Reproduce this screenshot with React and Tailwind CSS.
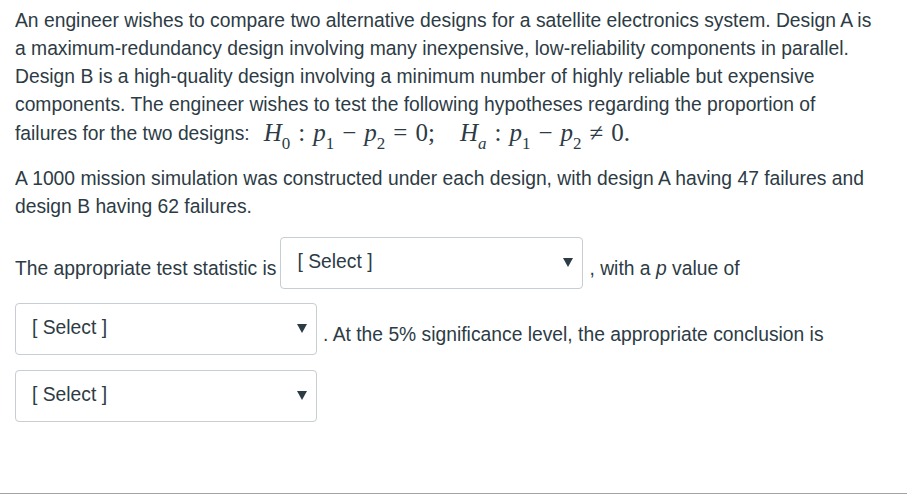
import React from 'react';

// Inline dropdown used inside the question text
function InlineSelect({ width }) {
  return (
    <div
      className={`flex h-[52px] ${width} shrink-0 items-center justify-between rounded-[4px] border border-[#c7cdd1] bg-white pl-[16px] pr-[9px] text-[19.3px] text-[#2d3b45]`}
    >
      <span className="-mt-[2px]">[ Select ]</span>
      <svg width="10" height="9" viewBox="0 0 10 9" className="-mt-[2px]">
        <polygon points="0,0 10,0 5,9" fill="#2d3b45" />
      </svg>
    </div>
  );
}

function Sub({ children }) {
  return <sub className="text-[17px] not-italic leading-none align-[-4px]">{children}</sub>;
}

function Op({ children, className = 'mx-[8px]' }) {
  return <span className={className}>{children}</span>;
}

export default function App() {
  return (
    <div
      className="relative h-[499px] w-[907px] bg-white text-[#2d3b45]"
      style={{ fontFamily: '"Liberation Sans", Arial, sans-serif' }}
    >
      <div className="pl-[15px] pt-[7px] text-[19.3px] leading-[28px]">
        {/* Question body */}
        <p className="whitespace-nowrap">
          An engineer wishes to compare two alternative designs for a satellite electronics system. Design A is
          <br />
          a maximum-redundancy design involving many inexpensive, low-reliability components in parallel.
          <br />
          Design B is a high-quality design involving a minimum number of highly reliable but expensive
          <br />
          components. The engineer wishes to test the following hypotheses regarding the proportion of
          <br />
          <span className="inline-flex h-[30px] items-center">
            failures for the two designs:
            <span
              className="ml-[14px] text-[25px] leading-none"
              style={{ fontFamily: '"Liberation Serif", "Times New Roman", serif' }}
            >
              <i>H</i><Sub>0</Sub>
              <Op>:</Op>
              <i>p</i><Sub>1</Sub>
              <Op>−</Op>
              <i>p</i><Sub>2</Sub>
              <Op>=</Op>
              0;
              <span className="inline-block w-[25px]" />
              <i>H</i><Sub><i>a</i></Sub>
              <Op>:</Op>
              <i>p</i><Sub>1</Sub>
              <Op>−</Op>
              <i>p</i><Sub>2</Sub>
              <Op>≠</Op>
              0.
            </span>
          </span>
        </p>

        <p className="mt-[16px] whitespace-nowrap">
          A 1000 mission simulation was constructed under each design, with design A having 47 failures and
          <br />
          design B having 62 failures.
        </p>

        {/* Answer dropdowns */}
        <div className="mt-[16px] flex flex-col gap-[14px]">
          <div className="flex items-end">
            <span className="pb-[6px] pr-[4px]">The appropriate test statistic is</span>
            <InlineSelect width="w-[303px]" />
            <span className="pb-[6px] pl-[6px]">
              , with a <i>p</i> value of
            </span>
          </div>
          <div className="flex items-end">
            <InlineSelect width="w-[302px]" />
            <span className="pb-[6px] pl-[6px]">. At the 5% significance level, the appropriate conclusion is</span>
          </div>
          <div className="flex items-end pt-[1px]">
            <InlineSelect width="w-[302px]" />
          </div>
        </div>
      </div>

      <div className="absolute left-0 right-0 top-[493px] h-px bg-[#a3a3a3]" />
    </div>
  );
}
